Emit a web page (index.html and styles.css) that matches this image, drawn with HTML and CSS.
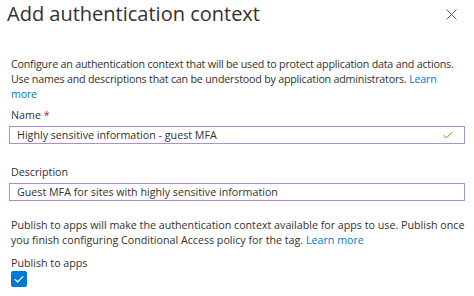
FILE: index.html
```html
<!DOCTYPE html>
<html>
<head>
<meta charset="utf-8">
<link rel="stylesheet" href="styles.css">
</head>
<body>
<div class="panel">
  <header class="head">
    <h1 class="title">Add authentication context</h1>
    <button class="close" aria-label="Close">
      <svg width="11" height="11" viewBox="0 0 11 11"><path d="M0.5 0.5 L10.5 10.5 M10.5 0.5 L0.5 10.5" stroke="#605e5c" stroke-width="1" fill="none"/></svg>
    </button>
  </header>
  <p class="intro intro-main">Configure an authentication context that will be used to protect application data and actions. Use names and descriptions that can be understood by application administrators. <a href="#" class="link">Learn more</a></p>
  <div class="field field-name">
    <label class="label">Name <span class="req">*</span></label>
    <div class="input">
      <span class="value">Highly sensitive information - guest MFA</span>
      <svg class="ok" width="10" height="8" viewBox="0 0 10 8"><path d="M0.6 4.2 L3.4 7 L9.4 1" stroke="#57a300" stroke-width="1" fill="none"/></svg>
    </div>
  </div>
  <div class="field field-desc">
    <label class="label">Description</label>
    <div class="input">
      <span class="value">Guest MFA for sites with highly sensitive information</span>
    </div>
  </div>
  <p class="intro intro-publish">Publish to apps will make the authentication context available for apps to use. Publish once you finish configuring Conditional Access policy for the tag. <a href="#" class="link">Learn more</a></p>
  <div class="field field-publish">
    <label class="label">Publish to apps</label>
    <span class="checkbox">
      <svg width="10" height="8" viewBox="0 0 10 8"><path d="M0.8 4.2 L3.6 6.9 L9.2 1.2" stroke="#fff" stroke-width="1.2" fill="none"/></svg>
    </span>
  </div>
</div>
</body>
</html>
```
FILE: styles.css
```css
html, body {
  margin: 0;
  padding: 0;
  background: #fff;
}
body {
  font-family: "Open Sans", "Noto Sans", "Liberation Sans", sans-serif;
  color: #323130;
  width: 474px;
  height: 296px;
  overflow: hidden;
}
.panel {
  padding: 0 9px 0 11px;
}
.head {
  display: flex;
  justify-content: space-between;
  align-items: center;
  height: 28px;
  margin-left: -4px;
}
.title {
  margin: 0;
  font-size: 20px;
  font-weight: 400;
  color: #323130;
  line-height: 28px;
}
.close {
  border: 0;
  background: none;
  padding: 0;
  margin-right: 8px;
  display: flex;
}
.intro {
  margin: 28.5px 0 0 0;
  font-size: 10.7px;
  line-height: 15px;
  color: #323130;
}
.intro-main {
  letter-spacing: -0.2px;
}
.link {
  color: #0078d4;
  text-decoration: none;
}
.field {
  display: flex;
  flex-direction: column;
}
.field-name {
  margin-top: 6.5px;
}
.field-desc {
  margin-top: 21px;
}
.intro-publish {
  margin-top: 16.5px;
}
.field-publish {
  margin-top: 8.5px;
}
.label {
  font-size: 10.7px;
  line-height: 15px;
  margin-bottom: 3px;
}
.field-publish .label {
  margin-bottom: 0;
}
.req {
  color: #a4262c;
}
.input {
  box-sizing: border-box;
  height: 18px;
  border: 1px solid #b08dcb;
  display: flex;
  align-items: center;
  justify-content: space-between;
  padding: 0 11px 0 7px;
  margin-left: -2px;
}
.value {
  font-size: 10.7px;
  line-height: 16px;
}
.checkbox {
  width: 16px;
  height: 16px;
  background: #0078d4;
  border-radius: 2px;
  display: flex;
  align-items: center;
  justify-content: center;
}
```
